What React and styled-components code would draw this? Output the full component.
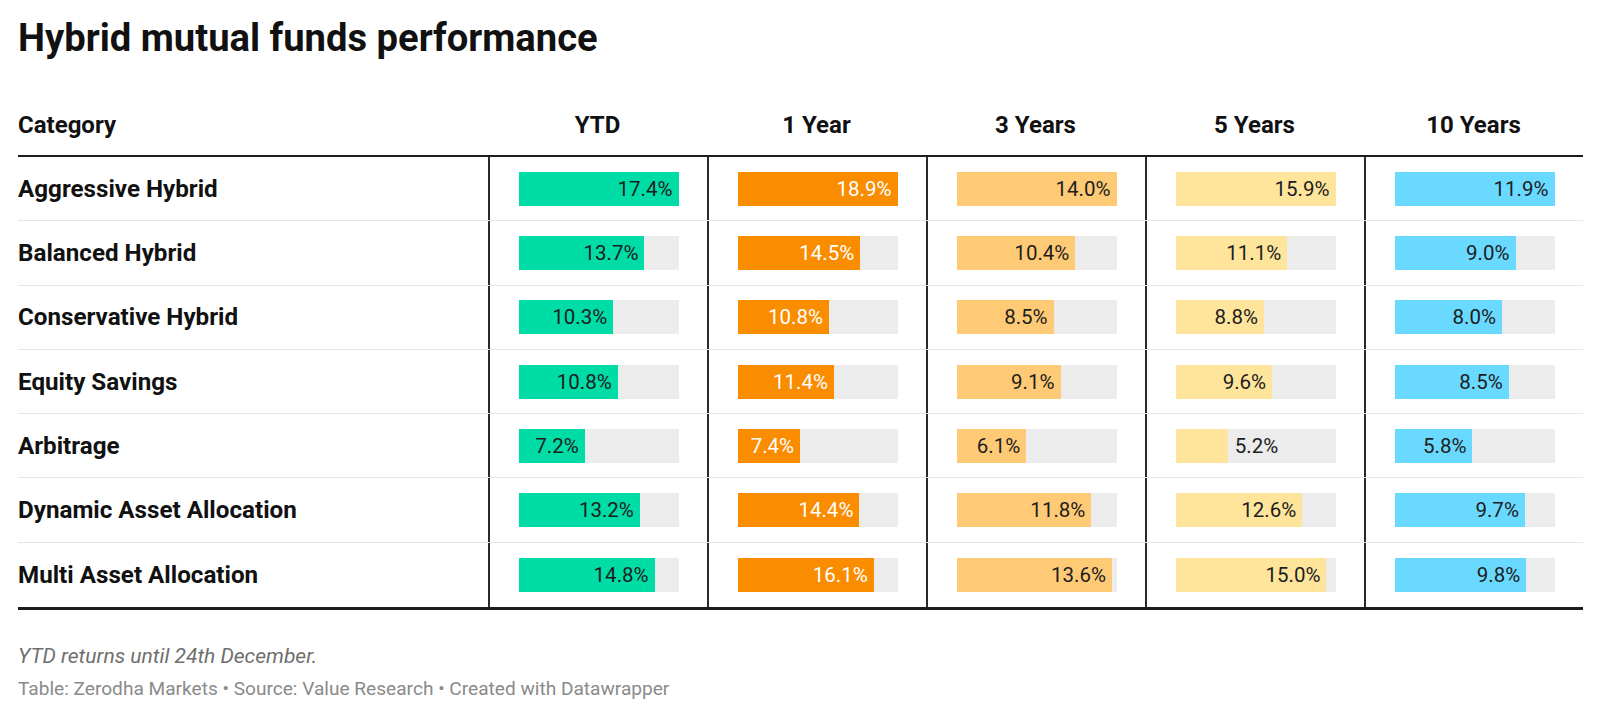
import React from "react";
import styled, { createGlobalStyle } from "styled-components";

const GlobalStyle = createGlobalStyle`
  html, body { margin: 0; padding: 0; background: #ffffff; }
  body { font-family: Roboto, "Liberation Sans", sans-serif; color: #1d1d1d; }
`;

const Page = styled.div`
  padding: 17px 17px 0 18px;
  width: 1565px;
`;

const Title = styled.h1`
  margin: 0;
  font-size: 38.2px;
  line-height: 42px;
  font-weight: 700;
  color: #111111;
`;

const Table = styled.div`
  margin-top: 53px;
  width: 1565px;
`;

const Row = styled.div`
  display: grid;
  grid-template-columns: 470px repeat(5, 1fr);
  box-sizing: border-box;
`;

const HeaderRow = styled(Row)`
  border-bottom: 2px solid #1d1d1d;
  padding-bottom: 16px;
`;

const HeaderCell = styled.div`
  font-size: 24px;
  line-height: 27px;
  font-weight: 700;
  color: #111111;
  text-align: ${(p) => (p.$left ? "left" : "center")};
`;

const Body = styled.div`
  border-bottom: 3px solid #1d1d1d;
`;

const BodyRow = styled(Row)`
  height: 64.3px;
  border-bottom: ${(p) => (p.$last ? "none" : "1px solid #e6e6e6")};
`;

const NameCell = styled.div`
  display: flex;
  align-items: center;
  font-size: 24.2px;
  font-weight: 700;
  color: #111111;
`;

const ValueCell = styled.div`
  display: flex;
  align-items: center;
  justify-content: center;
  border-left: 2px solid #2a2a2a;
`;

const Track = styled.div`
  display: flex;
  align-items: stretch;
  width: 160px;
  height: 34px;
  background: #ececec;
`;

const Fill = styled.div`
  display: flex;
  align-items: center;
  justify-content: flex-end;
  box-sizing: border-box;
  padding-right: 6px;
  background: ${(p) => p.$color};
  color: ${(p) => (p.$light ? "#ffffff" : "#1d1d1d")};
  font-size: 20.5px;
  white-space: nowrap;
`;

const OutsideLabel = styled.span`
  display: flex;
  align-items: center;
  margin-left: 7px;
  font-size: 20.5px;
  color: #1d1d1d;
  white-space: nowrap;
`;

const Notes = styled.p`
  margin: 35px 0 0;
  font-size: 21px;
  line-height: 23px;
  font-style: italic;
  color: #6f6f6f;
`;

const Source = styled.p`
  margin: 10px 0 0;
  font-size: 19.1px;
  line-height: 21px;
  color: #8a8a8a;
`;

const columns = [
  { key: "ytd", label: "YTD", color: "#00dca6", light: false },
  { key: "y1", label: "1 Year", color: "#fa8c00", light: true },
  { key: "y3", label: "3 Years", color: "#ffca76", light: false },
  { key: "y5", label: "5 Years", color: "#ffe59c", light: false },
  { key: "y10", label: "10 Years", color: "#6ad9ff", light: false },
];

const rows = [
  { name: "Aggressive Hybrid", ytd: 17.4, y1: 18.9, y3: 14.0, y5: 15.9, y10: 11.9 },
  { name: "Balanced Hybrid", ytd: 13.7, y1: 14.5, y3: 10.4, y5: 11.1, y10: 9.0 },
  { name: "Conservative Hybrid", ytd: 10.3, y1: 10.8, y3: 8.5, y5: 8.8, y10: 8.0 },
  { name: "Equity Savings", ytd: 10.8, y1: 11.4, y3: 9.1, y5: 9.6, y10: 8.5 },
  { name: "Arbitrage", ytd: 7.2, y1: 7.4, y3: 6.1, y5: 5.2, y10: 5.8 },
  { name: "Dynamic Asset Allocation", ytd: 13.2, y1: 14.4, y3: 11.8, y5: 12.6, y10: 9.7 },
  { name: "Multi Asset Allocation", ytd: 14.8, y1: 16.1, y3: 13.6, y5: 15.0, y10: 9.8 },
];

const maxes = Object.fromEntries(
  columns.map((c) => [c.key, Math.max(...rows.map((r) => r[c.key]))])
);

function Bar({ value, max, color, light }) {
  const width = (value / max) * 160;
  const label = `${value.toFixed(1)}%`;
  const inside = width >= 60;
  return (
    <Track>
      <Fill $color={color} $light={light} style={{ width: `${width}px` }}>
        {inside ? label : null}
      </Fill>
      {!inside && <OutsideLabel>{label}</OutsideLabel>}
    </Track>
  );
}

export default function App() {
  return (
    <>
      <GlobalStyle />
      <Page>
        <Title>Hybrid mutual funds performance</Title>
        <Table>
          <HeaderRow>
            <HeaderCell $left>Category</HeaderCell>
            {columns.map((c) => (
              <HeaderCell key={c.key}>{c.label}</HeaderCell>
            ))}
          </HeaderRow>
          <Body>
            {rows.map((r, i) => (
              <BodyRow key={r.name} $last={i === rows.length - 1}>
                <NameCell>{r.name}</NameCell>
                {columns.map((c) => (
                  <ValueCell key={c.key}>
                    <Bar value={r[c.key]} max={maxes[c.key]} color={c.color} light={c.light} />
                  </ValueCell>
                ))}
              </BodyRow>
            ))}
          </Body>
        </Table>
        <Notes>YTD returns until 24th December.</Notes>
        <Source>
          Table: Zerodha Markets • Source: Value Research • Created with Datawrapper
        </Source>
      </Page>
    </>
  );
}
